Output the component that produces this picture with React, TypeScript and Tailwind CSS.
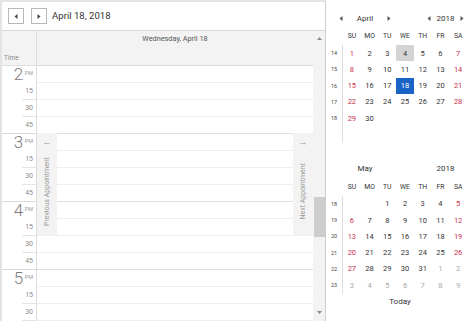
import React from "react";

type DayType = "n" | "w" | "o" | "sel" | "today" | "blank";
type Day = { d: string; t: DayType };
type Week = { wk: string; days: Day[] };

const mk = (spec: string): Day[] =>
  spec.split(" ").map((s) => {
    if (s === "_") return { d: "", t: "blank" };
    const m = s.match(/^(\d+)([a-z]*)$/);
    const d = m ? m[1] : s;
    const suf = m ? m[2] : "";
    const t: DayType =
      suf === "w" ? "w" : suf === "o" ? "o" : suf === "s" ? "sel" : suf === "t" ? "today" : "n";
    return { d, t };
  });

const april: Week[] = [
  { wk: "14", days: mk("1w 2 3 4s 5 6 7w") },
  { wk: "15", days: mk("8w 9 10 11 12 13 14w") },
  { wk: "16", days: mk("15w 16 17 18t 19 20 21w") },
  { wk: "17", days: mk("22w 23 24 25 26 27 28w") },
  { wk: "18", days: mk("29w 30 _ _ _ _ _") },
  { wk: "", days: mk("_ _ _ _ _ _ _") },
];

const may: Week[] = [
  { wk: "18", days: mk("_ _ 1 2 3 4 5w") },
  { wk: "19", days: mk("6w 7 8 9 10 11 12w") },
  { wk: "20", days: mk("13w 14 15 16 17 18 19w") },
  { wk: "21", days: mk("20w 21 22 23 24 25 26w") },
  { wk: "22", days: mk("27w 28 29 30 31 1o 2o") },
  { wk: "23", days: mk("3o 4o 5o 6o 7o 8o 9o") },
];

const dayNames = ["SU", "MO", "TU", "WE", "TH", "FR", "SA"];

const TriLeft = ({ c = "#555" }: { c?: string }) => (
  <svg width="4" height="5" viewBox="0 0 4 5">
    <path d="M3.5 0 L0.5 2.5 L3.5 5 Z" fill={c} />
  </svg>
);
const TriRight = ({ c = "#555" }: { c?: string }) => (
  <svg width="4" height="5" viewBox="0 0 4 5">
    <path d="M0.5 0 L3.5 2.5 L0.5 5 Z" fill={c} />
  </svg>
);

function dayClass(t: DayType) {
  switch (t) {
    case "w":
      return "text-[#c8324d]";
    case "o":
      return "text-[#a8a8a8]";
    case "sel":
      return "text-[#333] bg-[#d4d4d4]";
    case "today":
      return "text-white bg-[#1b63c6]";
    default:
      return "text-[#333]";
  }
}

function Month({ name, year, arrows, weeks }: { name: string; year: string; arrows: boolean; weeks: Week[] }) {
  return (
    <div className="flex flex-col">
      <div className="flex h-[19px] items-center text-[8px] text-[#333]">
        <div className="w-[13px]" />
        <div className="flex w-[4px] justify-center">{arrows && <TriLeft />}</div>
        <div className="w-[44px] text-center">{name}</div>
        <div className="flex w-[4px] justify-center">{arrows && <TriRight />}</div>
        <div className="w-[36px]" />
        <div className="flex w-[4px] justify-center">{arrows && <TriLeft />}</div>
        <div className="w-[29px] text-center">{year}</div>
        <div className="flex w-[4px] justify-center">{arrows && <TriRight />}</div>
      </div>
      <div className="flex h-[17px] items-center">
        <div className="w-[17px]" />
        <div className="grid w-[124px] grid-cols-7 text-[6.8px] text-[#333]">
          {dayNames.map((n) => (
            <div key={n} className="text-center">
              {n}
            </div>
          ))}
        </div>
      </div>
      <div className="flex">
        <div className="w-[17px] border-r border-[#dedede]">
          {weeks.map((w, i) => (
            <div key={i} className="flex h-[16.3px] items-center justify-center text-[5.5px] text-[#444]">
              {w.wk}
            </div>
          ))}
        </div>
        <div className="grid w-[124px] grid-cols-7">
          {weeks.map((w, i) =>
            w.days.map((d, j) => (
              <div
                key={i + "-" + j}
                className={"flex h-[16.3px] items-center justify-center text-[7.5px] " + dayClass(d.t)}
              >
                {d.d}
              </div>
            ))
          )}
        </div>
      </div>
    </div>
  );
}

const hours = [
  { h: "2", p: "PM" },
  { h: "3", p: "PM" },
  { h: "4", p: "PM" },
  { h: "5", p: "PM" },
];

function TimeColumn() {
  return (
    <div className="w-[35px] shrink-0 border-r border-[#dcdcdc]">
      {hours.map((h) => (
        <div key={h.h}>
          <div className="flex h-[17px] flex-col">
            <div className="flex flex-1 items-start justify-end pr-[3px] text-[#7c7c7c]">
              <span className="text-[17px] font-light leading-[17px]">{h.h}</span>
              <span className="ml-[1.5px] mt-[4px] text-[5.5px] leading-[6px] text-[#999]">{h.p}</span>
            </div>
            <div className="ml-[20px] h-px bg-[#e4e4e4]" />
          </div>
          {["15", "30", "45"].map((m, i) => (
            <div key={m} className="flex h-[17px] flex-col">
              <div className="flex flex-1 items-center justify-end pr-[3px] text-[7px] text-[#8c8c8c]">{m}</div>
              <div className={i < 2 ? "ml-[20px] h-px bg-[#e4e4e4]" : "h-px bg-[#d9d9d9]"} />
            </div>
          ))}
        </div>
      ))}
    </div>
  );
}

function DayColumn() {
  return (
    <div className="relative flex-1 bg-white">
      {hours.map((h) => (
        <div key={h.h}>
          {[0, 1, 2, 3].map((q) => (
            <div key={q} className="flex h-[17px] flex-col">
              <div className="flex-1" />
              <div className={q < 3 ? "h-px bg-[#efefef]" : "h-px bg-[#dfdfdf]"} />
            </div>
          ))}
        </div>
      ))}
      <div className="absolute left-0 top-[67px] flex h-[102px] w-[20px] flex-col items-center bg-[#f3f3f3] pt-[4px] text-[#9a9a9a]">
        <span className="text-[9px] leading-[10px]">←</span>
        <div className="flex flex-1 items-center">
          <span className="rotate-180 whitespace-nowrap text-[7px] [writing-mode:vertical-rl]">Previous Appointment</span>
        </div>
      </div>
      <div className="absolute right-0 top-[67px] flex h-[102px] w-[20px] flex-col items-center bg-[#f3f3f3] pt-[4px] text-[#9a9a9a]">
        <span className="text-[9px] leading-[10px]">→</span>
        <div className="flex flex-1 items-center">
          <span className="rotate-180 whitespace-nowrap text-[7px] [writing-mode:vertical-rl]">Next Appointment</span>
        </div>
      </div>
    </div>
  );
}

export default function App() {
  return (
    <div className="flex h-[321px] w-[474px] overflow-hidden bg-white font-['Roboto',sans-serif]">
      {/* Scheduler */}
      <div className="flex w-[326px] shrink-0 flex-col border-l-2 border-r border-t-2 border-l-[#e3e3e3] border-r-[#cdcdcd] border-t-[#e3e3e3]">
        <div className="flex h-[29px] shrink-0 items-start border-b border-[#d6d6d6] bg-white pl-[6px] pt-[6px]">
          <button className="flex h-[16px] w-[16px] items-center justify-center border border-[#b8b8b8] bg-white">
            <TriLeft c="#444" />
          </button>
          <button className="ml-[7px] flex h-[16px] w-[16px] items-center justify-center border border-[#b8b8b8] bg-white">
            <TriRight c="#444" />
          </button>
          <div className="ml-[5px] flex h-[16px] items-center text-[9.6px] text-[#333]">April 18, 2018</div>
        </div>
        <div className="flex min-h-0 flex-1">
          <div className="flex min-w-0 flex-1 flex-col">
            <div className="flex h-[35px] shrink-0 border-b border-[#dedede] bg-[#f3f3f3]">
              <div className="flex w-[35px] shrink-0 items-end border-r border-[#dcdcdc] pb-[1px] pl-[2px] text-[6.5px] text-[#888]">
                Time
              </div>
              <div className="flex-1 pt-[3px] text-center text-[7.3px] text-[#555]">Wednesday, April 18</div>
            </div>
            <div className="flex min-h-0 flex-1 overflow-hidden">
              <TimeColumn />
              <DayColumn />
            </div>
          </div>
          <div className="flex w-[12px] shrink-0 flex-col items-center bg-[#f3f3f3]">
            <div className="flex h-[9px] items-end">
              <svg width="5" height="3" viewBox="0 0 5 3">
                <path d="M0 3 L2.5 0 L5 3 Z" fill="#8a8a8a" />
              </svg>
            </div>
            <div className="mt-[157px] h-[40px] w-[11px] bg-[#cdcdcd]" />
            <div className="flex-1" />
            <div className="flex h-[10px] items-start">
              <svg width="5" height="3" viewBox="0 0 5 3">
                <path d="M0 0 L2.5 3 L5 0 Z" fill="#8a8a8a" />
              </svg>
            </div>
          </div>
        </div>
      </div>
      {/* Calendar */}
      <div className="flex w-[148px] shrink-0 flex-col bg-white pt-[9px]">
        <Month name="April" year="2018" arrows weeks={april} />
        <div className="mt-[17px]">
          <Month name="May" year="2018" arrows={false} weeks={may} />
        </div>
        <div className="flex h-[16px] items-center justify-center text-[8px] text-[#333]">Today</div>
      </div>
    </div>
  );
}
